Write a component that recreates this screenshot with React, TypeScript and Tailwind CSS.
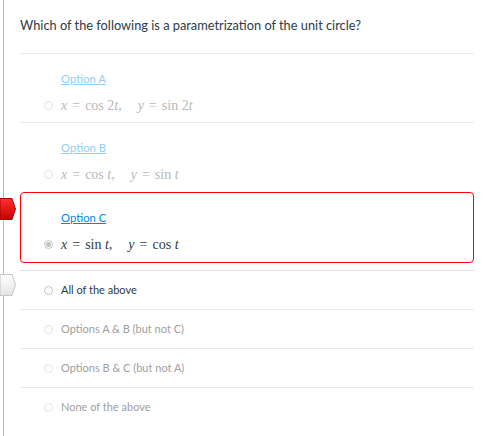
import React from "react";

const lato = { fontFamily: "Lato, 'Noto Sans', sans-serif" };
const mathFont = { fontFamily: "'Liberation Serif', 'DejaVu Serif', serif" };

const Radio = ({ faded, checked }: { faded?: boolean; checked?: boolean }) => (
  <span
    className={`flex h-[9px] w-[9px] shrink-0 items-center justify-center rounded-full border ${
      faded ? "border-[#e3e3e3]" : "border-[#c4c4c4]"
    } bg-white`}
  >
    {checked && <span className="h-[5px] w-[5px] rounded-full bg-[#c2c2c2]" />}
  </span>
);

const Var = ({ children }: { children: React.ReactNode }) => <i>{children}</i>;

// x = f(t),   y = g(t)
const MathExpr = ({ a, b, arg }: { a: string; b: string; arg: React.ReactNode }) => (
  <span className="flex items-baseline whitespace-pre">
    <Var>x</Var>
    <span className="mx-[5px]">=</span>
    {a} {arg},
    <span className="w-[16px]" />
    <Var>y</Var>
    <span className="mx-[5px]">=</span>
    {b} {arg}
  </span>
);

const Marker = ({ active }: { active?: boolean }) => (
  <svg width="16" height="22" viewBox="0 0 16 22" className="block">
    <defs>
      <linearGradient id={active ? "mr" : "mg"} x1="0" y1="0" x2="0" y2="1">
        <stop offset="0" stopColor={active ? "#ff3030" : "#ffffff"} />
        <stop offset="1" stopColor={active ? "#c40000" : "#e4e4e4"} />
      </linearGradient>
    </defs>
    <path
      d="M0 0.5 H12 L15.5 11 L12 21.5 H0 Z"
      fill={`url(#${active ? "mr" : "mg"})`}
      stroke={active ? "#b00000" : "#c6c6c6"}
      strokeWidth="1"
    />
  </svg>
);

type Choice = { label: string; strong?: boolean };

const plainChoices: Choice[] = [
  { label: "All of the above", strong: true },
  { label: "Options A & B (but not C)" },
  { label: "Options B & C (but not A)" },
  { label: "None of the above" },
];

export default function App() {
  return (
    <div className="relative h-[436px] w-[490px] overflow-hidden bg-white" style={lato}>
      <div className="absolute left-0 top-[198px]">
        <Marker active />
      </div>
      <div className="absolute left-0 top-[274px]">
        <Marker />
      </div>

      <div className="ml-[3px] h-full border-l border-[#b8b8b8] pl-[16px] pr-[16px]">
        <div className="flex h-[54px] items-start border-b border-[#e8e8e8] pt-[16px] text-[12.8px] text-[#2d3b45]">
          Which of the following is a parametrization of the unit circle?
        </div>

        <div className="h-[69px] border-b border-[#e8e8e8] pt-[18px]">
          <div className="pl-[41px] text-[11.3px] leading-[14px]">
            <span className="text-[#90d0f6] underline">Option A</span>
          </div>
          <div className="mt-[9px] flex items-center gap-[8px] pl-[24px] text-[14px] text-[#b8b8b8]" style={mathFont}>
            <Radio faded />
            <MathExpr a="cos" b="sin" arg={<span>2<Var>t</Var></span>} />
          </div>
        </div>

        <div className="h-[69px] pt-[18px]">
          <div className="pl-[41px] text-[11.3px] leading-[14px]">
            <span className="text-[#90d0f6] underline">Option B</span>
          </div>
          <div className="mt-[9px] flex items-center gap-[8px] pl-[24px] text-[14px] text-[#b8b8b8]" style={mathFont}>
            <Radio faded />
            <MathExpr a="cos" b="sin" arg={<Var>t</Var>} />
          </div>
        </div>

        <div className="h-[71px] rounded-[4px] border border-[#ff0000] pt-[18px]">
          <div className="pl-[40px] text-[11.3px] leading-[14px]">
            <span className="text-[#0b86d4] underline">Option C</span>
          </div>
          <div className="mt-[9px] flex items-center gap-[8px] pl-[23px] text-[14px] text-[#2d3b45]" style={mathFont}>
            <Radio checked />
            <MathExpr a="sin" b="cos" arg={<Var>t</Var>} />
          </div>
        </div>

        <div className="mt-[7px] border-t border-[#e0e0e0]">
          {plainChoices.map((c, i) => (
            <div
              key={c.label}
              className={`flex h-[39px] items-center gap-[8px] pl-[24px] text-[11px] ${
                i < plainChoices.length - 1 ? "border-b border-[#e8e8e8]" : ""
              } ${c.strong ? "text-[#2d3b45]" : "text-[#a0a0a0]"}`}
            >
              <Radio faded={!c.strong} />
              <span>{c.label}</span>
            </div>
          ))}
        </div>
      </div>
    </div>
  );
}
